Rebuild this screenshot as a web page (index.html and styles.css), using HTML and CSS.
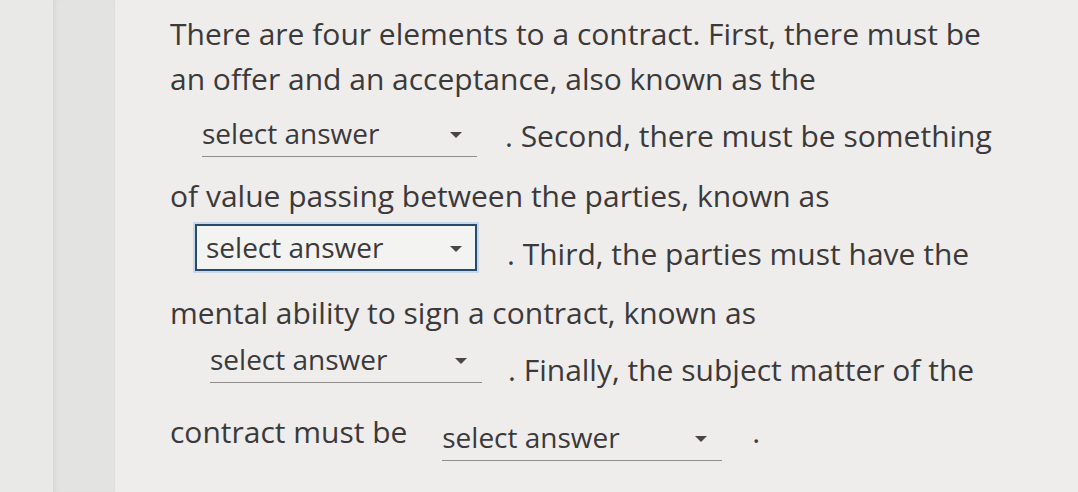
FILE: index.html
```html
<!DOCTYPE html>
<html lang="en">
<head>
<meta charset="utf-8">
<title>Elements of a contract</title>
<link rel="stylesheet" href="styles.css">
</head>
<body>
<div class="page">
  <div class="rail"></div>
  <div class="panel"></div>
  <main class="content">
    <p class="question">There are four elements to a contract. First, there must be an offer and an acceptance, also known as the <span class="dd dd--first"><span class="dd-label">select answer</span><svg class="caret" viewBox="0 0 12 6" width="12" height="6"><path d="M0 0h12L6 6z"/></svg></span>. Second, there must be something of value passing between the parties, known as <span class="dd dd--focused"><span class="dd-label">select answer</span><svg class="caret" viewBox="0 0 12 6" width="12" height="6"><path d="M0 0h12L6 6z"/></svg></span>. Third, the parties must have the mental ability to sign a contract, known as <span class="dd dd--third"><span class="dd-label">select answer</span><svg class="caret" viewBox="0 0 12 6" width="12" height="6"><path d="M0 0h12L6 6z"/></svg></span>. Finally, the subject matter of the contract must be <span class="dd dd--last"><span class="dd-label">select answer</span><svg class="caret" viewBox="0 0 12 6" width="12" height="6"><path d="M0 0h12L6 6z"/></svg></span>.</p>
  </main>
</div>
</body>
</html>
```

FILE: styles.css
```css
html, body {
  margin: 0;
  padding: 0;
  height: 100%;
  background: #edecea;
}

.page {
  display: flex;
  min-height: 492px;
  font-family: "Open Sans", "Noto Sans", sans-serif;
  color: #3c393a;
}

.rail {
  width: 53px;
  flex: none;
  background: #e9e9e8;
}

.panel {
  width: 62px;
  flex: none;
  background: #e3e3e2;
  box-shadow: inset 5px 0 6px -4px rgba(0, 0, 0, 0.08), inset -2px 0 3px -2px rgba(0, 0, 0, 0.05);
}

.content {
  flex: 1;
  padding: 11px 0 0 55px;
  background: #eeedeb;
}

.question {
  margin: 0;
  width: 845px;
  font-size: 30px;
  line-height: 45px;
}

.dd {
  display: inline-flex;
  align-items: baseline;
  justify-content: space-between;
  box-sizing: border-box;
  width: 275px;
  padding: 18px 15px 9px 0;
  border-bottom: 1px solid #8f8d8d;
  vertical-align: 3px;
  font-size: 28px;
  line-height: 28px;
}

.caret {
  flex: none;
  fill: #4a4647;
  align-self: center;
  margin-top: 4px;
}

.dd--first {
  margin: 0 28px 16px 32px;
}

.dd--focused {
  width: 282px;
  margin: 6px 30px 19px 25px;
  padding: 7px 13px 8px 9px;
  border: 2px solid #284a6d;
  box-shadow: 0 0 0 2px rgba(150, 190, 230, 0.45);
  background: #f3f3f1;
  vertical-align: 7px;
}

.dd--third {
  width: 272px;
  margin: 0 26px 14px 40px;
  padding-top: 10px;
  vertical-align: 11px;
}

.dd--last {
  width: 280px;
  margin: 0 30px 16px 27px;
  padding-top: 26px;
  vertical-align: -5px;
}
```
